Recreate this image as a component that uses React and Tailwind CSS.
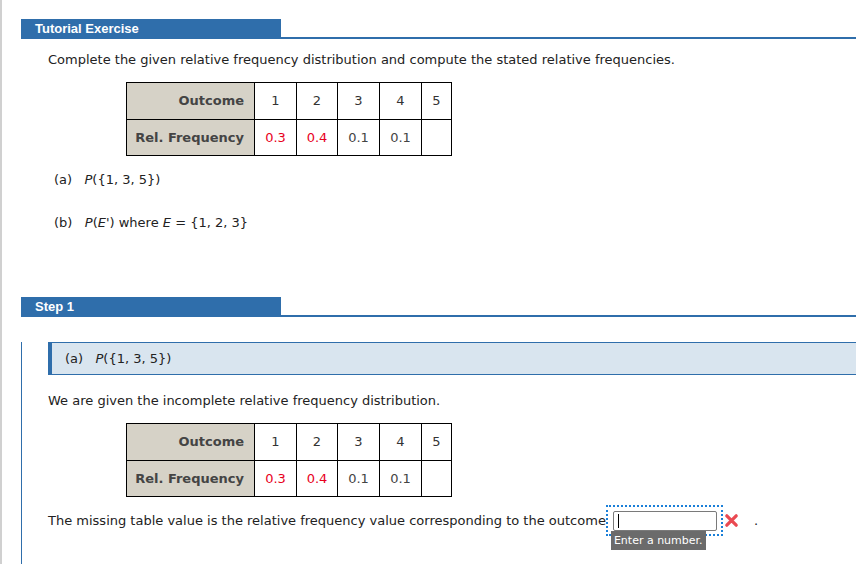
import React from 'react';

const FreqTable = () => {
  const outcomes = ['1', '2', '3', '4', '5'];
  const freqs = [
    { v: '0.3', red: true },
    { v: '0.4', red: true },
    { v: '0.1' },
    { v: '0.1' },
    { v: '' },
  ];
  const widths = ['w-[42px]', 'w-[41px]', 'w-[42px]', 'w-[42px]', 'w-[30px]'];

  return (
    <table className="border-collapse text-[13px] ml-[78px]">
      <tbody>
        <tr className="h-[37px]">
          <th className="w-[128px] border border-black bg-[#d6d2c7] text-right pr-[10px] font-bold text-[#444]">Outcome</th>
          {outcomes.map((o, i) => (
            <td key={o} className={`${widths[i]} border border-black text-center text-[#333]`}>{o}</td>
          ))}
        </tr>
        <tr className="h-[36px]">
          <th className="border border-black bg-[#d6d2c7] text-right pr-[10px] font-bold text-[#444]">Rel. Frequency</th>
          {freqs.map((f, i) => (
            <td key={i} className={`border border-black text-center ${f.red ? 'text-[#e8001c]' : 'text-[#444]'}`}>{f.v}</td>
          ))}
        </tr>
      </tbody>
    </table>
  );
};

const SectionHeader = ({ title }) => (
  <div className="flex items-end border-b-2 border-[#2f6eab]">
    <div className="w-[260px] h-[18px] bg-[#2f6eab] pl-[14px] text-white font-bold text-[13px] leading-[20px] font-['Liberation_Sans',Arial,sans-serif]">
      {title}
    </div>
  </div>
);

export default function App() {
  return (
    <div className="h-[564px] border-l-2 border-[#d0d0d0] bg-white text-[13px] text-[#222] font-['DejaVu_Sans',Verdana,sans-serif] overflow-hidden">
      <div className="pl-[19px] pt-[19px]">
        {/* Tutorial Exercise */}
        <SectionHeader title="Tutorial Exercise" />
        <div className="pl-[27px]">
          <p className="mt-[13px] leading-[16px]">
            Complete the given relative frequency distribution and compute the stated relative frequencies.
          </p>
          <div className="mt-[14px]">
            <FreqTable />
          </div>
          <p className="mt-[16px] ml-[6px] leading-[16px]">
            (a)&nbsp;&nbsp;&nbsp;<i>P</i>({'{'}1, 3, 5{'}'})
          </p>
          <p className="mt-[27px] ml-[6px] leading-[16px]">
            (b)&nbsp;&nbsp;&nbsp;<i>P</i>(<i>E</i>') where <i>E</i> = {'{'}1, 2, 3{'}'}
          </p>
        </div>

        {/* Step 1 */}
        <div className="mt-[66px]">
          <SectionHeader title="Step 1" />
          <div className="border-l border-[#2f6eab] pl-[26px] pb-[60px]">
            <div className="mt-[25px] h-[33px] flex items-center bg-[#d9e5ef] border-l-[4px] border-y border-[#2f6eab] pl-[13px]">
              (a)&nbsp;&nbsp;&nbsp;<i>P</i>({'{'}1, 3, 5{'}'})
            </div>
            <p className="mt-[18px] leading-[16px]">We are given the incomplete relative frequency distribution.</p>
            <div className="mt-[14px]">
              <FreqTable />
            </div>
            <div className="mt-[8px] flex items-center leading-[16px]">
              <span>The missing table value is the relative frequency value corresponding to the outcome</span>
              <div className="relative">
                <div className="border-2 border-dotted border-[#1a7fd8] pl-[5px] pr-[4px] pt-[4px] pb-[3px]">
                  <div className="w-[104px] h-[20px] border border-[#7a7a7a] rounded-[2px] bg-white flex items-center pl-[4px]">
                    <div className="w-px h-[14px] bg-black" />
                  </div>
                </div>
                <div className="absolute left-[5px] top-[26px] bg-[#6b6b6b] text-white text-[11px] px-[3px] h-[19px] leading-[19px] whitespace-nowrap">
                  Enter a number.
                </div>
              </div>
              <svg width="15" height="15" viewBox="0 0 16 16" className="ml-[1px] -mt-[1px]">
                <path d="M3 3 L13 13 M13 3 L3 13" stroke="#ea4a52" strokeWidth="3.5" strokeLinecap="round" />
              </svg>
              <span className="ml-[15px]">.</span>
            </div>
          </div>
        </div>
      </div>
    </div>
  );
}
